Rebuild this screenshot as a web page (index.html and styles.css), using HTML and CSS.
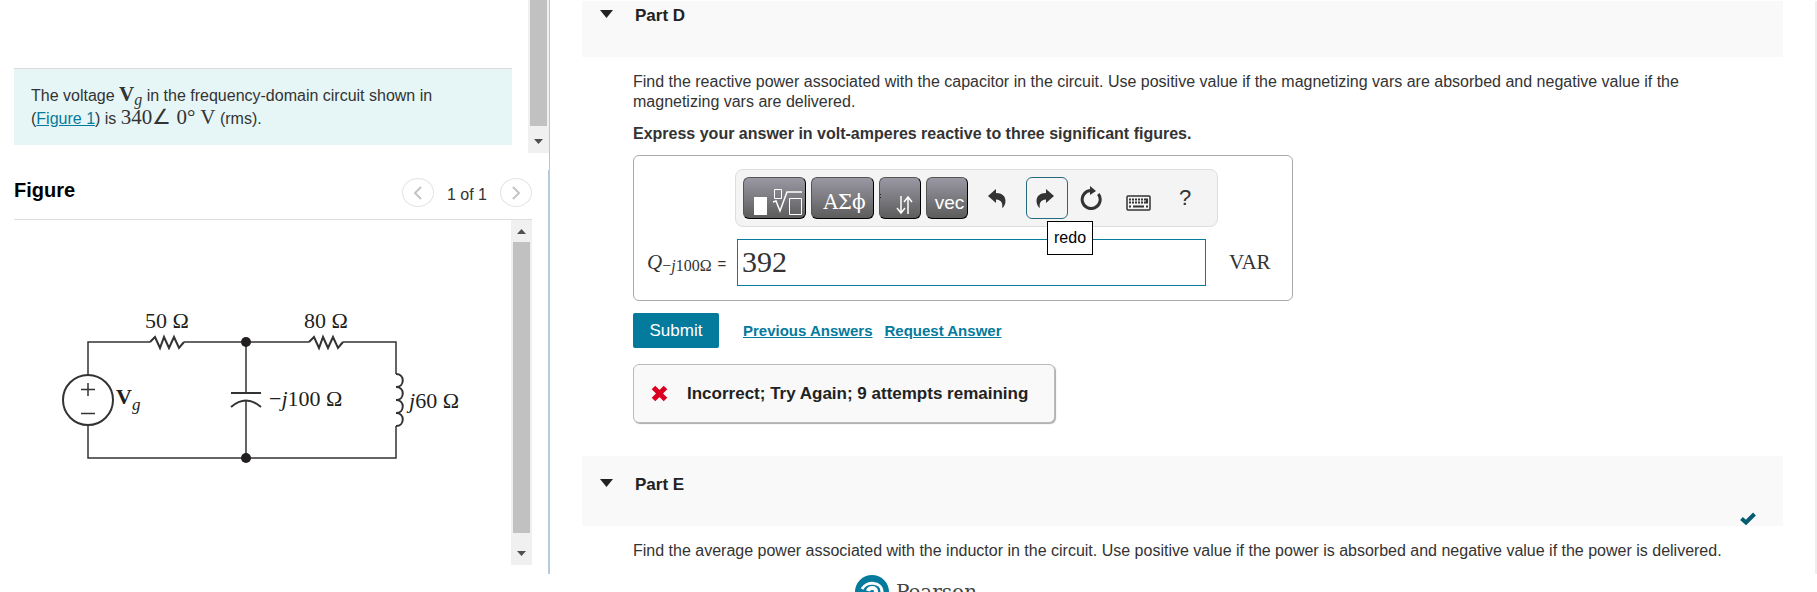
FILE: index.html
```html
<!DOCTYPE html>
<html lang="en">
<head>
    <meta charset="UTF-8">
    <title>Mastering Engineering</title>
    <link rel="stylesheet" href="styles.css">
</head>
<body>
    <div class="page">
        <aside class="sidebar">
            <section class="intro">
                <div class="intro-box">
                    The voltage <span class="math"><b>V</b><i class="sub">g</i></span> in the frequency-domain circuit shown in (<a href="#figure">Figure 1</a>) is <span class="math">340∠ 0° V</span> (rms).
                </div>
                <div class="scrollbar">
                    <div class="thumb"></div>
                    <svg class="arrow" width="9" height="5" viewBox="0 0 9 5"><path d="M0 0h9L4.500 5z"/></svg>
                </div>
            </section>
            <section class="figure" id="figure">
                <header class="figure-header">
                    <h2>Figure</h2>
                    <nav class="pager">
                        <button class="round" aria-label="Previous figure"><svg width="10" height="16" viewBox="0 0 10 16"><path d="M8 2L2 8l6 6"/></svg></button>
                        <span>1 of 1</span>
                        <button class="round" aria-label="Next figure"><svg width="10" height="16" viewBox="0 0 10 16"><path d="M2 2l6 6-6 6"/></svg></button>
                    </nav>
                </header>
                <div class="figure-body">
                    <svg class="circuit" width="410" height="170" viewBox="60 300 410 170">
                        <g class="wire">
                            <path d="M88 375V342H150M184 342H309M343 342H396V374"/>
                            <path d="M88 425V458H396V426M246 342V393M246 401V458"/>
                        </g>
                        <g class="part">
                            <path d="M150 342l5-5 5 11 4-11 5 11 5-11 5 11 5-6M309 342l5-5 5 11 4-11 5 11 5-11 5 11 5-6"/>
                            <circle cx="88" cy="400" r="25"/>
                            <path d="M81 389.500H95M88 383V396M81 413.500H95" stroke-width="1.500"/>
                            <path d="M231 393H261M231 407Q246 394 261 407"/>
                            <path d="M396 374c9 0 9 13 0 13c9 0 9 13 0 13c9 0 9 13 0 13c9 0 9 13 0 13"/>
                        </g>
                        <circle cx="246" cy="342" r="5"/>
                        <circle cx="246" cy="458" r="5"/>
                        <text x="145" y="328">50 Ω</text>
                        <text x="304" y="328">80 Ω</text>
                        <text x="116" y="404"><tspan font-weight="bold">V</tspan><tspan class="small" font-style="italic" dy="6">g</tspan></text>
                        <text x="269" y="406">−<tspan font-style="italic">j</tspan>100 Ω</text>
                        <text x="409" y="408"><tspan font-style="italic">j</tspan>60 Ω</text>
                    </svg>
                    <div class="scrollbar">
                        <svg class="arrow" width="9" height="5" viewBox="0 0 9 5"><path d="M0 5h9L4.500 0z"/></svg>
                        <div class="thumb"></div>
                        <svg class="arrow" width="9" height="5" viewBox="0 0 9 5"><path d="M0 0h9L4.500 5z"/></svg>
                    </div>
                </div>
            </section>
        </aside>

        <main class="content">
            <section>
                <header class="part-header part-d">
                    <svg class="caret" width="13" height="8" viewBox="0 0 13 8"><path d="M0 0h13L6.500 8z"/></svg>
                    <h3>Part D</h3>
                </header>
                <div class="part-body">
                    <p>Find the reactive power associated with the capacitor in the circuit. Use positive value if the magnetizing vars are absorbed and negative value if the magnetizing vars are delivered.</p>
                    <p class="instruction">Express your answer in volt-amperes reactive to three significant figures.</p>

                    <div class="answer">
                        <div class="toolbar">
                            <button class="dark wide" aria-label="Templates">
                                <svg width="61" height="40" viewBox="1 1 61 40">
                                    <rect x="11" y="20" width="13" height="18" fill="#fff"/>
                                    <path d="M31.500 12.500h7v9h-7zM46.500 21.500h12v16h-12z" stroke="#fff" fill="none"/>
                                    <path d="M30 25l3-1 4 10 7-19h15" stroke="#fff" stroke-width="1.500" fill="none"/>
                                </svg>
                            </button>
                            <button class="dark wide greek">ΑΣϕ</button>
                            <button class="dark" aria-label="Subscripts">
                                <svg width="40" height="40" viewBox="1 1 40 40">
                                    <path d="M22 19v17M18 31l4 5 4-5M29 37V20M25 25l4-5 4 5" stroke="#fff" stroke-width="1.500" fill="none"/>
                                    <path d="M1 17h1v1H1zM1 20h1v1H1z" fill="#222"/>
                                </svg>
                            </button>
                            <button class="dark vec">vec</button>
                            <button class="tool undo" aria-label="undo">
                                <svg width="18" height="19" viewBox="0 0 18 19"><path d="M0 7l8-7v4c6 0 9.500 3 9.500 8 0 3-1.500 6-3.500 7 1-4 0-8-6-8.500V14z"/></svg>
                            </button>
                            <div class="tip-anchor">
                                <button class="tool active" aria-label="redo">
                                    <svg width="18" height="19" viewBox="0 0 18 19"><path d="M18 7l-8-7v4C4 4 .5 7 .5 12c0 3 1.500 6 3.500 7-1-4 0-8 6-8.500V14z"/></svg>
                                </button>
                                <span class="tooltip" role="tooltip">redo</span>
                            </div>
                            <button class="tool" aria-label="reset">
                                <svg width="22" height="24" viewBox="0 0 22 24"><path d="M18.300 8A9 9 0 1 1 11 4.500" fill="none" stroke="#333" stroke-width="3"/><path d="M10 0l6 5-6 4z"/></svg>
                            </button>
                            <button class="tool" aria-label="keyboard shortcuts">
                                <svg class="keyboard" width="25" height="16" viewBox="0 0 25 16"><rect x="1" y="1" width="23" height="14" rx="1" fill="none" stroke="#333" stroke-width="1.500"/><path d="M3 4.500h18M3 7.500h18" stroke="#333" stroke-width="2" stroke-dasharray="2 1"/><path d="M3 11.500h2M7 11.500h11M20 11.500h2M21 3.500v5" stroke="#333" stroke-width="2"/></svg>
                            </button>
                            <button class="tool help" aria-label="help">?</button>
                        </div>
                        <div class="answer-row">
                            <label for="answer"><i>Q</i><span class="sub">−<i>j</i>100Ω</span><span class="equals">=</span></label>
                            <input type="text" id="answer" value="392">
                            <span class="unit">VAR</span>
                        </div>
                    </div>

                    <div class="actions">
                        <button class="submit">Submit</button>
                        <a href="#">Previous Answers</a>
                        <a href="#">Request Answer</a>
                    </div>

                    <div class="feedback">
                        <svg width="17" height="17" viewBox="0 0 17 17"><path d="M2.500 2.500l12 12M14.500 2.500l-12 12"/></svg>
                        Incorrect; Try Again; 9 attempts remaining
                    </div>
                </div>
            </section>

            <section>
                <header class="part-header part-e">
                    <svg class="caret" width="13" height="8" viewBox="0 0 13 8"><path d="M0 0h13L6.500 8z"/></svg>
                    <h3>Part E</h3>
                    <svg class="check" width="16" height="13" viewBox="0 0 16 13"><path d="M1.500 6.500l4.500 4L14.500 2"/></svg>
                </header>
                <div class="part-body">
                    <p>Find the average power associated with the inductor in the circuit. Use positive value if the power is absorbed and negative value if the power is delivered.</p>
                </div>
            </section>
        </main>
    </div>

    <footer class="footer">
        <svg width="34" height="34" viewBox="0 0 34 34"><circle cx="17" cy="17" r="17" fill="#047a9c"/><path d="M7 14c4-8 20-8 20 3 0 5-4 8-8 8" fill="none" stroke="#fff" stroke-width="3"/><path d="M13 16c1-4 8-4 8 0 0 3-3 4-5 4v8" fill="none" stroke="#fff" stroke-width="4"/></svg>
        <span>Pearson</span>
    </footer>
</body>
</html>
```

FILE: styles.css
```css
* {
    box-sizing: border-box;
}
body {
    margin: 0;
    height: 100vh;
    overflow: hidden;
    background: #fff;
    color: #333;
    font: 16px/20px "Liberation Sans", Arial, sans-serif;
}
h2, h3, p {
    margin: 0;
}
button {
    padding: 0;
    font-family: inherit;
    cursor: pointer;
}
a {
    color: #047a9c;
    white-space: nowrap;
}
.page {
    display: flex;
    height: calc(100vh - 18px);
}

/* left column */
.sidebar {
    flex: 0 0 550px;
    display: flex;
    flex-direction: column;
}
.intro {
    display: flex;
    align-items: flex-end;
    gap: 16px;
    height: 170px;
    padding: 0 0 17px 14px;
    border-right: 1px solid #bcc5d2;
}
.intro-box {
    flex: 1;
    margin-bottom: 8px;
    padding: 15px 17px;
    border-top: 1px solid #ddd;
    background: #e6f6f6;
    line-height: 23px;
}
.math {
    font-family: "Liberation Serif", serif;
    font-size: 21px;
    line-height: 20px;
}
.sub {
    position: relative;
    top: 4px;
    font-size: 16px;
    line-height: 1px;
}
.scrollbar {
    align-self: stretch;
    flex: 0 0 21px;
    display: flex;
    flex-direction: column;
    align-items: center;
    gap: 13px;
    padding-bottom: 9px;
    background: #f0f0f0;
}
.thumb {
    flex: 1;
    width: 17px;
    background: #c1c1c1;
}
.arrow {
    fill: #505050;
}
.figure {
    flex: 1;
    display: flex;
    flex-direction: column;
    padding: 8px 16px 9px 14px;
    border-right: 2px solid #b8cbdc;
}
.figure-header {
    display: flex;
    justify-content: space-between;
    padding-bottom: 12px;
    border-bottom: 1px solid #ddd;
}
.figure-header h2 {
    color: #000;
    font-size: 20px;
    line-height: 24px;
}
.pager {
    display: flex;
    align-items: center;
    gap: 13px;
}
.pager span {
    padding-top: 4px;
}
.round {
    display: flex;
    align-items: center;
    justify-content: center;
    width: 32px;
    height: 29px;
    border: 1px solid #e4e4e4;
    border-radius: 50%;
    background: #fff;
}
.round path {
    fill: none;
    stroke: #c4c4c4;
    stroke-width: 2;
}
.figure-body {
    flex: 1;
    display: flex;
    justify-content: space-between;
    padding-left: 46px;
}
.figure-body .scrollbar {
    gap: 8px;
    padding-top: 9px;
}
.figure-body .thumb {
    margin-bottom: 10px;
}
.circuit {
    margin-top: 80px;
    fill: #231f20;
    font-family: "Liberation Serif", serif;
    font-size: 22px;
}
.circuit .small {
    font-size: 17px;
}
.wire, .part {
    fill: none;
    stroke: #333;
    stroke-width: 1.5;
}
.part {
    stroke-width: 2;
}

/* right column */
.content {
    flex: 1;
    margin-top: 1px;
    padding: 0 32px;
    border-right: 2px solid #eee;
}
.part-header {
    display: flex;
    align-items: flex-start;
    background: #f9f9f9;
    color: #222;
}
.part-header h3 {
    margin-left: 22px;
    font-size: 17px;
    line-height: 21px;
}
.part-d {
    height: 56px;
    padding: 4px 18px;
}
.part-e {
    height: 70px;
    padding: 18px 27px 1px 18px;
}
.caret {
    margin-top: 5px;
    fill: #222;
}
.check {
    align-self: flex-end;
    margin-left: auto;
    fill: none;
    stroke: #035c70;
    stroke-width: 4;
}
.part-body {
    padding: 15px 20px 0 51px;
}
.instruction {
    margin: 12px 0 11px;
    font-weight: bold;
}
.answer {
    width: 660px;
    height: 146px;
    padding: 13px 19px 0 13px;
    border: 1px solid #aaa;
    border-radius: 6px;
}
.toolbar {
    display: flex;
    gap: 5px;
    width: 483px;
    margin-left: 88px;
    padding: 7px;
    border: 1px solid #ddd;
    border-radius: 8px;
    background: #f4f4f4;
}
.dark, .tool {
    width: 42px;
    height: 42px;
    border-radius: 6px;
}
.dark {
    border: 1px solid;
    border-color: #555 #000 #000 #555;
    background: linear-gradient(#9a98a3, #5c5c5c);
    color: #fff;
    font-size: 19px;
}
.dark svg {
    display: block;
}
.dark.wide {
    width: 63px;
}
.dark.greek {
    padding: 8px 0 0 4px;
    font-family: "DejaVu Serif", serif;
    font-size: 20px;
}
.dark.vec {
    padding: 9px 0 0 5px;
}
.tool {
    display: flex;
    align-items: center;
    justify-content: center;
    padding: 0 6px 0 0;
    border: 1px solid transparent;
    background: none;
    fill: #333;
    color: #333;
}
.undo {
    margin-left: 6px;
}
.active {
    padding-right: 4px;
    border-color: #256b80;
}
.keyboard {
    margin-top: 10px;
}
.help {
    font-size: 22px;
}
.tip-anchor {
    position: relative;
}
.tooltip {
    position: absolute;
    top: 44px;
    left: 21px;
    padding: 6px;
    border: 1px solid #000;
    background: #fff;
    color: #000;
}
.answer-row {
    display: flex;
    align-items: center;
    margin-top: 12px;
    font-family: "Liberation Serif", serif;
    font-size: 21px;
}
.answer-row label {
    flex: 0 0 90px;
}
.answer-row label, .unit {
    padding-bottom: 2px;
}
.answer-row .sub {
    top: 2px;
}
.equals {
    margin-left: 6px;
    font: 15px "Liberation Sans", Arial, sans-serif;
}
.answer-row input {
    width: 469px;
    height: 47px;
    margin-right: 23px;
    padding: 0 4px 2px;
    border: 1px solid #077a9f;
    color: #333;
    font-family: inherit;
    font-size: 30px;
}
.actions {
    display: flex;
    align-items: center;
    gap: 12px;
    margin: 12px 0 16px;
    font-size: 15px;
    font-weight: bold;
}
.submit {
    width: 86px;
    height: 35px;
    margin-right: 12px;
    border: 0;
    border-radius: 2px;
    background: #047a9c;
    color: #fff;
    font-size: 17px;
}
.feedback {
    display: flex;
    align-items: center;
    gap: 19px;
    width: fit-content;
    height: 59px;
    margin-bottom: 33px;
    padding: 0 26px 0 17px;
    border: 1px solid #bbb;
    border-radius: 6px;
    box-shadow: 1px 1px 1px #aaa;
    background: #f9f9f9;
    color: #222;
    font-size: 17px;
    font-weight: bold;
}
.feedback svg {
    fill: none;
    stroke: #db0020;
    stroke-width: 5;
}

.footer {
    display: flex;
    justify-content: center;
    gap: 7px;
    padding: 1px 0 0 15px;
    color: #444;
    font: 20px/34px "DejaVu Serif", serif;
}
.footer svg {
    flex: none;
}
```
